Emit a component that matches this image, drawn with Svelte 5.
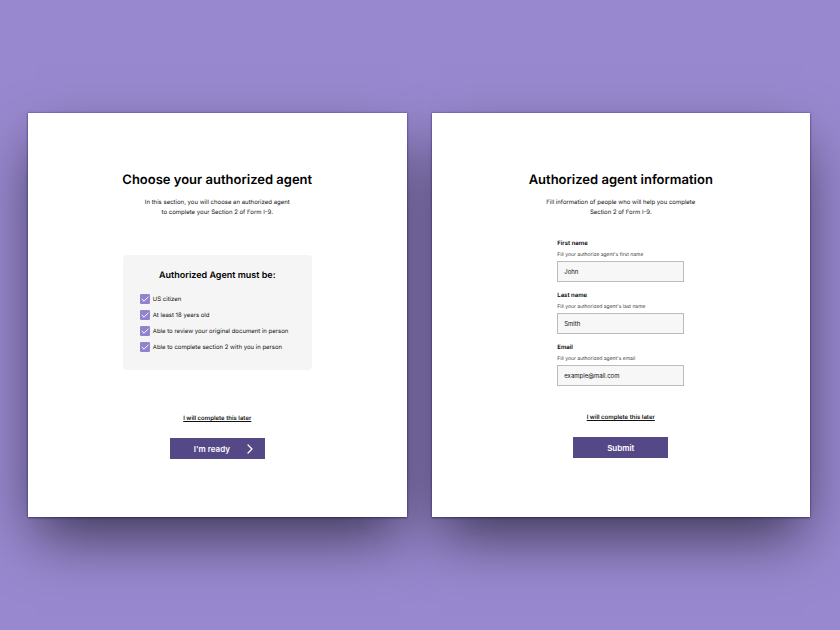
<script>
    let requirements = [
        { id: "citizen", text: "US citizen", checked: true },
        { id: "adult", text: "At least 18 years old", checked: true },
        { id: "review", text: "Able to review your original document in person", checked: true },
        { id: "complete", text: "Able to complete section 2 with you in person", checked: true }
    ];

    let fields = [
        { id: "first-name", label: "First name", hint: "Fill your authorize agent's first name", value: "John" },
        { id: "last-name", label: "Last name", hint: "Fill your authorized agent's last name", value: "Smith" },
        { id: "email", label: "Email", hint: "Fill your authorized agent's email", value: "example@mail.com" }
    ];

    let submitted = false;

    function submit () {
        submitted = true;
    }
</script>

<main>
    <section class="card">
        <h1>Choose your authorized agent</h1>
        <p class="intro">
            In this section, you will choose an authorized agent<br />
            to complete your Section 2 of Form I-9.
        </p>
        <div class="panel">
            <h2>Authorized Agent must be:</h2>
            <ul>
                {#each requirements as item}
                    <li>
                        <span class="check">
                            <input type="checkbox" id={item.id} bind:checked={item.checked} />
                            {#if item.checked}
                                <svg viewBox="0 0 10 10" aria-hidden="true">
                                    <path d="M2 5.2 4 7.2 8.2 3" />
                                </svg>
                            {/if}
                        </span>
                        <label for={item.id}>{item.text}</label>
                    </li>
                {/each}
            </ul>
        </div>
        <a class="later" href="#later">I will complete this later</a>
        <button type="button" class="btn btn-ready">
            <span>I'm ready</span>
            <svg viewBox="0 0 6 10" aria-hidden="true">
                <path d="M1 1 5 5 1 9" />
            </svg>
        </button>
    </section>

    <section class="card">
        <h1>Authorized agent information</h1>
        <p class="intro">
            Fill information of people who will help you complete<br />
            Section 2 of Form I-9.
        </p>
        <form on:submit|preventDefault={submit}>
            <div class="fields">
                {#each fields as field}
                    <div class="field">
                        <label for={field.id}>{field.label}</label>
                        <small id="{field.id}-hint">{field.hint}</small>
                        <input
                            type="text"
                            id={field.id}
                            aria-describedby="{field.id}-hint"
                            bind:value={field.value} />
                    </div>
                {/each}
            </div>
            <a class="later" href="#later">I will complete this later</a>
            <button type="submit" class="btn" disabled={submitted}>Submit</button>
        </form>
    </section>
</main>

<style>
    :global(body) {
        background-color: #9888cf;
    }

    main {
        display: grid;
        grid-template-columns: 1fr 1fr;
        align-content: center;
        gap: 25px;
        box-sizing: border-box;
        min-height: 100vh;
        padding: 24px 30px 24px 28px;
        font-family: Inter, "Liberation Sans", sans-serif;
        font-size: 6px;
        text-rendering: geometricPrecision;
        color: #111;
        isolation: isolate;
    }

    .card {
        position: relative;
        display: flex;
        flex-direction: column;
        align-items: center;
        padding: 58px 16px;
        background-color: #fff;
    }

    /* keeps the shadow of one card from falling on the other */
    .card::before {
        content: "";
        position: absolute;
        inset: 0;
        z-index: -1;
        box-shadow: 0 0 2px rgba(50, 30, 120, 0.6), 0 1px 2px rgba(20, 10, 50, 0.4), 0 26px 56px -8px rgba(0, 0, 0, 0.62);
    }

    h1 {
        margin: 0;
        font-size: 13px;
        font-weight: 600;
        line-height: 18px;
        color: #000;
    }

    .intro {
        margin: 9px 0 0;
        line-height: 10px;
        text-align: center;
    }

    /* Requirements */
    .panel {
        box-sizing: border-box;
        width: 189px;
        margin: 37px 0 43px;
        padding: 13px 17px 15px;
        background-color: #f5f5f5;
        border-radius: 4px;
    }

    h2 {
        margin: 0 0 7px;
        font-size: 9px;
        font-weight: 600;
        line-height: 16px;
        text-align: center;
        color: #000;
    }

    ul {
        margin: 0;
        padding: 0;
        list-style: none;
    }

    li {
        display: flex;
        align-items: center;
        gap: 3px;
        height: 16px;
        white-space: nowrap;
    }

    .check {
        display: grid;
        width: 10px;
        height: 10px;
    }

    .check > * {
        grid-area: 1 / 1;
    }

    .check input {
        appearance: none;
        width: 10px;
        height: 10px;
        margin: 0;
        background-color: #fff;
        border: 1px solid #9282cf;
        border-radius: 1px;
    }

    .check input:checked {
        background-color: #9282cf;
    }

    svg {
        fill: none;
        stroke: #fff;
        stroke-linecap: round;
        stroke-linejoin: round;
        pointer-events: none;
    }

    /* Actions */
    .later {
        font-weight: 600;
        line-height: 12px;
        color: #111;
        text-underline-offset: 1px;
    }

    .btn {
        width: 95px;
        height: 21px;
        margin-top: 13px;
        padding: 0;
        font-family: inherit;
        font-size: 8px;
        font-weight: 600;
        color: #fff;
        background-color: #554887;
        border: none;
        cursor: pointer;
    }

    .btn-ready {
        display: flex;
        align-items: center;
        justify-content: space-between;
        padding: 0 12px 0 24px;
    }

    .btn-ready svg {
        width: 6px;
        height: 10px;
        stroke-width: 1.3;
    }

    /* Agent form */
    form {
        display: flex;
        flex-direction: column;
        align-items: center;
        margin-top: 20px;
    }

    .fields {
        display: flex;
        flex-direction: column;
        gap: 8px;
        width: 127px;
        margin-bottom: 26px;
    }

    .field {
        display: flex;
        flex-direction: column;
    }

    .field label {
        font-weight: 600;
        line-height: 12px;
        color: #000;
    }

    .field small {
        font-size: 5px;
        line-height: 11px;
        color: #444;
    }

    .field input {
        box-sizing: border-box;
        width: 100%;
        height: 21px;
        padding: 0 6px;
        font-family: inherit;
        font-size: 6px;
        color: #111;
        background-color: #f7f7f7;
        border: 1px solid #bbb;
        border-radius: 0;
        outline: none;
    }
</style>
